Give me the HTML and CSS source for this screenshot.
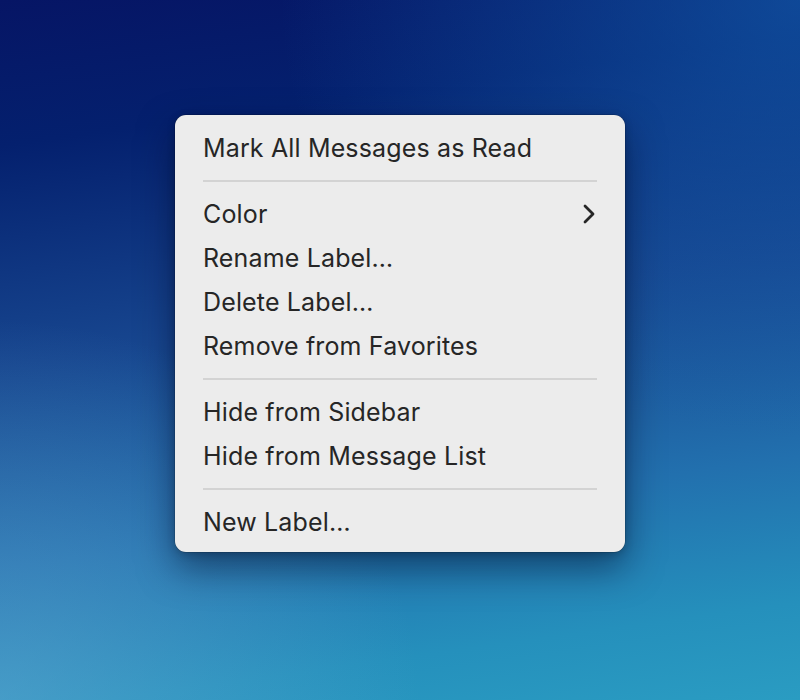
FILE: index.html
```html
<!DOCTYPE html>
<html lang="en">
<head>
<meta charset="utf-8">
<title>Label context menu</title>
<link rel="stylesheet" href="styles.css">
</head>
<body>
<div class="desktop">
  <div class="menu" role="menu">
    <div class="item" role="menuitem">Mark All Messages as Read</div>
    <div class="sep"></div>
    <div class="item has-sub" role="menuitem">
      <span>Color</span>
      <svg class="chev" width="12" height="20" viewBox="0 0 12 20"><polyline points="2,2 10,10 2,18" fill="none" stroke="#262626" stroke-width="2.8" stroke-linecap="round" stroke-linejoin="round"/></svg>
    </div>
    <div class="item" role="menuitem">Rename Label…</div>
    <div class="item" role="menuitem">Delete Label…</div>
    <div class="item" role="menuitem">Remove from Favorites</div>
    <div class="sep"></div>
    <div class="item" role="menuitem">Hide from Sidebar</div>
    <div class="item" role="menuitem">Hide from Message List</div>
    <div class="sep"></div>
    <div class="item" role="menuitem">New Label…</div>
  </div>
</div>
</body>
</html>
```

FILE: styles.css
```css
html, body {
  margin: 0;
  padding: 0;
  height: 100%;
}
body {
  font-family: Inter, "Noto Sans", "Liberation Sans", sans-serif;
}
.desktop {
  width: 800px;
  height: 700px;
  box-sizing: border-box;
  padding-top: 115px;
  padding-left: 175px;
  background:
    radial-gradient(ellipse 420px 380px at 0% 100%, rgba(110, 175, 215, 0.45), rgba(110, 175, 215, 0) 100%),
    radial-gradient(ellipse 520px 440px at 100% 0%, rgba(20, 95, 175, 0.65), rgba(20, 95, 175, 0) 100%),
    linear-gradient(172deg, #061565 0%, #04206e 18%, #17468f 45%, #2270ae 70%, #2590bc 88%, #2a9cc2 100%);
}
.menu {
  width: 450px;
  box-sizing: border-box;
  padding: 11px 0 8px;
  background: #ececec;
  border-radius: 11px;
  box-shadow: 0 0 0 0.5px rgba(0, 0, 0, 0.25), 0 16px 36px rgba(0, 10, 40, 0.5), 0 2px 8px rgba(0, 0, 0, 0.2);
  color: #262626;
}
.item {
  height: 44px;
  display: flex;
  align-items: center;
  justify-content: space-between;
  padding: 0 30px 0 28px;
  font-size: 25px;
  letter-spacing: 0.15px;
}
.chev {
  display: block;
}
.sep {
  height: 22px;
  display: flex;
  align-items: center;
  padding: 0 28px;
}
.sep::before {
  content: "";
  flex: 1;
  height: 2px;
  background: #d3d3d3;
}
```
